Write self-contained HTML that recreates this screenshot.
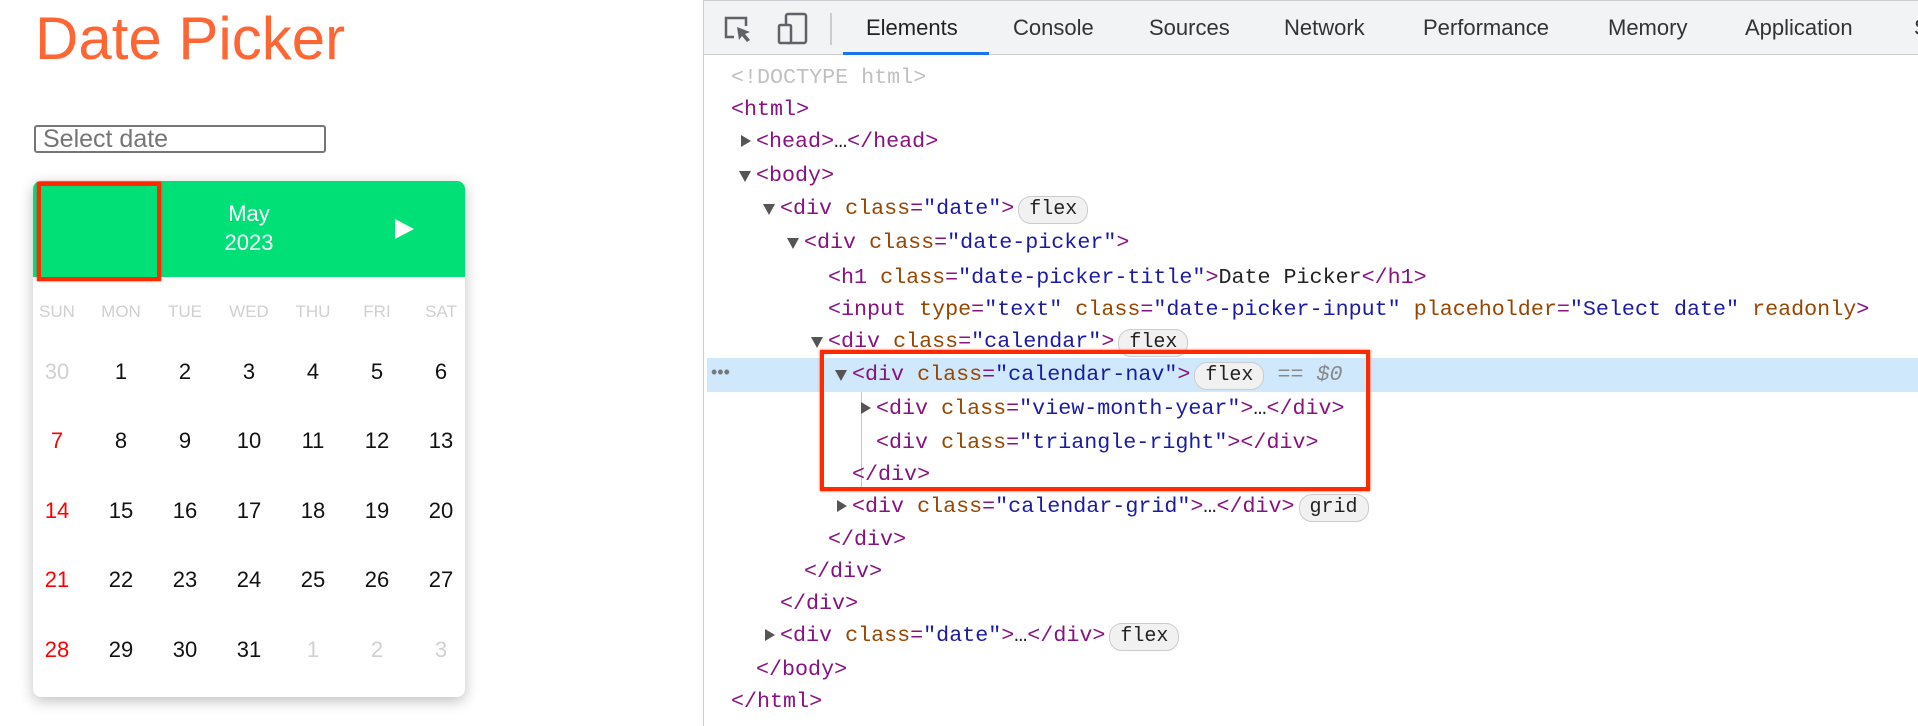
<!DOCTYPE html>
<html><head><style>
*{margin:0;padding:0;box-sizing:border-box}
body{width:1918px;height:726px;background:#fff;position:relative;overflow:hidden;font-family:"Liberation Sans",sans-serif}
.abs{position:absolute}
h1{position:absolute;left:35px;top:6px;font-size:60px;font-weight:normal;color:#ff6633;line-height:66px}
.inp{position:absolute;left:34px;top:125px;width:292px;height:28px;border:2px solid #767676;border-radius:3px;font-size:25px;color:#757575;line-height:24px;padding-left:7px}
.cal{position:absolute;left:33px;top:181px;width:432px;height:516px;background:#fff;border-radius:8px;box-shadow:0 4px 14px rgba(0,0,0,.25);overflow:hidden}
.hdr{position:absolute;left:0;top:0;width:432px;height:96px;background:#00e077}
.my{position:absolute;left:150px;width:132px;text-align:center;color:#fff;font-size:22px;line-height:28px}
.tri{position:absolute;left:362px;top:38px;width:0;height:0;border-top:10px solid transparent;border-bottom:10px solid transparent;border-left:19px solid #fff}
.c{position:absolute;width:64px;text-align:center;font-size:22px;line-height:30px;color:#111}
.wd{font-size:17px;color:#d0d0d0}
.g{color:#d0d0d0}.r{color:#f00}
.rb{position:absolute;border:4px solid #ff2a00;box-shadow:0 0 2px #ff2a00}
.dt{position:absolute;left:703px;top:0;width:1215px;height:726px;background:#fff;border-left:1px solid #cbcdd1}
.tabs{position:absolute;left:0;top:0;width:1215px;height:55px;background:#f1f3f4;border-bottom:1px solid #cbcdd1;border-top:1px solid #cbcdd1}
.tab{position:absolute;top:13px;font-size:22px;color:#333;line-height:28px}
.ln{position:absolute;font-family:"Liberation Mono",monospace;font-size:21.7px;line-height:33px;white-space:pre;color:#881280}
.an{color:#994500}.av{color:#1a1aa6}.tx{color:#222}
.ar{display:inline-block;width:0;height:0;position:absolute}
.ad{left:-17px;top:12px;border-left:6px solid transparent;border-right:6px solid transparent;border-top:11px solid #555}
.arr{left:-15px;top:10px;border-top:6px solid transparent;border-bottom:6px solid transparent;border-left:10px solid #555}
.bd{display:inline-block;font-size:20px;line-height:26px;padding:0 10px;border:1.5px solid #ccc;border-radius:13px;background:#f1f1f1;color:#222;margin-left:4px}
</style></head><body>
<h1>Date Picker</h1>
<div class="inp">Select date</div>
<div class="cal">
<div class="hdr"></div>
<div class="my" style="top:19px">May</div>
<div class="my" style="top:48px">2023</div>
<div class="tri"></div>
<div class="c wd" style="left:-8px;top:116px">SUN</div>
<div class="c wd" style="left:56px;top:116px">MON</div>
<div class="c wd" style="left:120px;top:116px">TUE</div>
<div class="c wd" style="left:184px;top:116px">WED</div>
<div class="c wd" style="left:248px;top:116px">THU</div>
<div class="c wd" style="left:312px;top:116px">FRI</div>
<div class="c wd" style="left:376px;top:116px">SAT</div>

<div class="c g" style="left:-8px;top:176px">30</div><div class="c" style="left:56px;top:176px">1</div><div class="c" style="left:120px;top:176px">2</div><div class="c" style="left:184px;top:176px">3</div><div class="c" style="left:248px;top:176px">4</div><div class="c" style="left:312px;top:176px">5</div><div class="c" style="left:376px;top:176px">6</div>
<div class="c r" style="left:-8px;top:245px">7</div><div class="c" style="left:56px;top:245px">8</div><div class="c" style="left:120px;top:245px">9</div><div class="c" style="left:184px;top:245px">10</div><div class="c" style="left:248px;top:245px">11</div><div class="c" style="left:312px;top:245px">12</div><div class="c" style="left:376px;top:245px">13</div>
<div class="c r" style="left:-8px;top:315px">14</div><div class="c" style="left:56px;top:315px">15</div><div class="c" style="left:120px;top:315px">16</div><div class="c" style="left:184px;top:315px">17</div><div class="c" style="left:248px;top:315px">18</div><div class="c" style="left:312px;top:315px">19</div><div class="c" style="left:376px;top:315px">20</div>
<div class="c r" style="left:-8px;top:384px">21</div><div class="c" style="left:56px;top:384px">22</div><div class="c" style="left:120px;top:384px">23</div><div class="c" style="left:184px;top:384px">24</div><div class="c" style="left:248px;top:384px">25</div><div class="c" style="left:312px;top:384px">26</div><div class="c" style="left:376px;top:384px">27</div>
<div class="c r" style="left:-8px;top:454px">28</div><div class="c" style="left:56px;top:454px">29</div><div class="c" style="left:120px;top:454px">30</div><div class="c" style="left:184px;top:454px">31</div><div class="c g" style="left:248px;top:454px">1</div><div class="c g" style="left:312px;top:454px">2</div><div class="c g" style="left:376px;top:454px">3</div>
</div>
<div class="rb" style="left:37px;top:182px;width:124px;height:99px"></div>

<div class="dt">
<div class="tabs">
<svg class="abs" style="left:19px;top:14px" width="32" height="30" viewBox="0 0 32 30"><path d="M11 22H3V3h20v8" fill="none" stroke="#5f6368" stroke-width="2.5"/><path d="M14 12l13 5-5 2 5 6-3 2-5-6-3 4z" fill="#5f6368"/></svg>
<svg class="abs" style="left:73px;top:11px" width="32" height="34" viewBox="0 0 32 34"><rect x="9" y="2" width="20" height="29" rx="2" fill="none" stroke="#5f6368" stroke-width="2.5"/><rect x="2" y="13" width="12" height="18" rx="1.5" fill="#f1f3f4" stroke="#5f6368" stroke-width="2.5"/></svg>
<div class="abs" style="left:126px;top:12px;width:1.5px;height:32px;background:#ccc"></div>
<div class="tab" style="left:162px;color:#222">Elements</div>
<div class="abs" style="left:139px;top:51px;width:146px;height:3px;background:#1a73e8"></div>
<div class="tab" style="left:309px">Console</div>
<div class="tab" style="left:445px">Sources</div>
<div class="tab" style="left:580px">Network</div>
<div class="tab" style="left:719px">Performance</div>
<div class="tab" style="left:904px">Memory</div>
<div class="tab" style="left:1041px">Application</div>
<div class="tab" style="left:1210px">S</div>
</div>
<div class="abs" style="left:3px;top:358px;width:1212px;height:34px;background:#cfe8fc"></div>
<div class="abs" style="left:7px;top:362px;font-size:18px;color:#777;font-family:'Liberation Sans'">•••</div>
<div class="abs" style="left:157px;top:392px;width:1px;height:98px;background:#a8c7fa"></div>
</div>

<div class="ln" style="left:731px;top:61px;color:#c0c0c0">&lt;!DOCTYPE html&gt;</div>
<div class="ln" style="left:731px;top:93px">&lt;html&gt;</div>
<div class="ln" style="left:756px;top:125px"><span class="ar arr"></span>&lt;head&gt;<span class="tx">…</span>&lt;/head&gt;</div>
<div class="ln" style="left:756px;top:159px"><span class="ar ad"></span>&lt;body&gt;</div>
<div class="ln" style="left:780px;top:192px"><span class="ar ad"></span>&lt;div <span class="an">class</span>=<span class="av">"date"</span>&gt;<span class="bd">flex</span></div>
<div class="ln" style="left:804px;top:226px"><span class="ar ad"></span>&lt;div <span class="an">class</span>=<span class="av">"date-picker"</span>&gt;</div>
<div class="ln" style="left:828px;top:261px">&lt;h1 <span class="an">class</span>=<span class="av">"date-picker-title"</span>&gt;<span class="tx">Date Picker</span>&lt;/h1&gt;</div>
<div class="ln" style="left:828px;top:293px">&lt;input <span class="an">type</span>=<span class="av">"text"</span> <span class="an">class</span>=<span class="av">"date-picker-input"</span> <span class="an">placeholder</span>=<span class="av">"Select date"</span> <span class="an">readonly</span>&gt;</div>
<div class="ln" style="left:828px;top:325px"><span class="ar ad"></span>&lt;div <span class="an">class</span>=<span class="av">"calendar"</span>&gt;<span class="bd">flex</span></div>
<div class="ln" style="left:852px;top:358px"><span class="ar ad"></span>&lt;div <span class="an">class</span>=<span class="av">"calendar-nav"</span>&gt;<span class="bd">flex</span> <span style="color:#888">==</span> <span style="color:#888;font-style:italic">$0</span></div>
<div class="ln" style="left:876px;top:392px"><span class="ar arr"></span>&lt;div <span class="an">class</span>=<span class="av">"view-month-year"</span>&gt;<span class="tx">…</span>&lt;/div&gt;</div>
<div class="ln" style="left:876px;top:426px">&lt;div <span class="an">class</span>=<span class="av">"triangle-right"</span>&gt;&lt;/div&gt;</div>
<div class="ln" style="left:852px;top:458px">&lt;/div&gt;</div>
<div class="ln" style="left:852px;top:490px"><span class="ar arr"></span>&lt;div <span class="an">class</span>=<span class="av">"calendar-grid"</span>&gt;<span class="tx">…</span>&lt;/div&gt;<span class="bd">grid</span></div>
<div class="ln" style="left:828px;top:523px">&lt;/div&gt;</div>
<div class="ln" style="left:804px;top:555px">&lt;/div&gt;</div>
<div class="ln" style="left:780px;top:587px">&lt;/div&gt;</div>
<div class="ln" style="left:780px;top:619px"><span class="ar arr"></span>&lt;div <span class="an">class</span>=<span class="av">"date"</span>&gt;<span class="tx">…</span>&lt;/div&gt;<span class="bd">flex</span></div>
<div class="ln" style="left:756px;top:653px">&lt;/body&gt;</div>
<div class="ln" style="left:731px;top:685px">&lt;/html&gt;</div>

<div class="rb" style="left:820px;top:350px;width:550px;height:141px"></div>
</body></html>
